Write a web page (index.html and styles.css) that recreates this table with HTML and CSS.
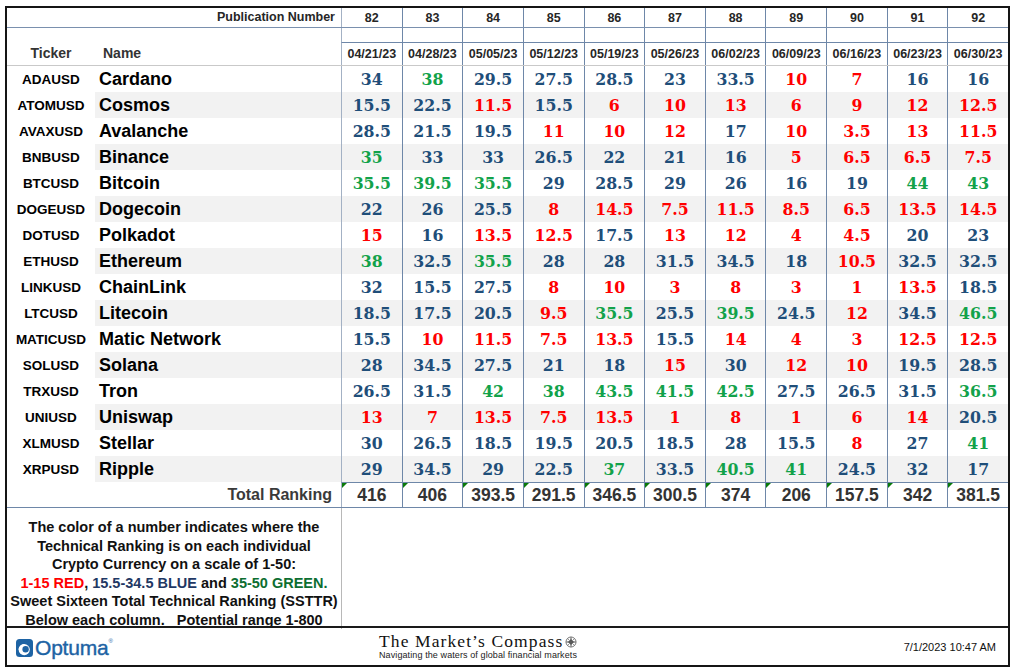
FILE: index.html
```html
<!DOCTYPE html>
<html>
<head>
<meta charset="utf-8">
<link rel="stylesheet" href="styles.css">
</head>
<body>
<div class="sheet">
  <div class="row h1">
    <div class="pub">Publication Number</div>
    <div class="hc first">82</div><div class="hc">83</div><div class="hc">84</div><div class="hc">85</div><div class="hc">86</div><div class="hc">87</div><div class="hc">88</div><div class="hc">89</div><div class="hc">90</div><div class="hc">91</div><div class="hc">92</div>
  </div>
  <div class="row h2">
    <div class="blank"></div>
    <div class="hc first"></div><div class="hc"></div><div class="hc"></div><div class="hc"></div><div class="hc"></div><div class="hc"></div><div class="hc"></div><div class="hc"></div><div class="hc"></div><div class="hc"></div><div class="hc"></div>
  </div>
  <div class="row h3">
    <div class="th-tick">Ticker</div><div class="th-name">Name</div>
    <div class="hc first">04/21/23</div><div class="hc">04/28/23</div><div class="hc">05/05/23</div><div class="hc">05/12/23</div><div class="hc">05/19/23</div><div class="hc">05/26/23</div><div class="hc">06/02/23</div><div class="hc">06/09/23</div><div class="hc">06/16/23</div><div class="hc">06/23/23</div><div class="hc">06/30/23</div>
  </div>

  <div class="row data"><div class="tick">ADAUSD</div><div class="name">Cardano</div><div class="v first b">34</div><div class="v g">38</div><div class="v b">29.5</div><div class="v b">27.5</div><div class="v b">28.5</div><div class="v b">23</div><div class="v b">33.5</div><div class="v r">10</div><div class="v r">7</div><div class="v b">16</div><div class="v b">16</div></div>
  <div class="row data alt"><div class="tick">ATOMUSD</div><div class="name">Cosmos</div><div class="v first b">15.5</div><div class="v b">22.5</div><div class="v r">11.5</div><div class="v b">15.5</div><div class="v r">6</div><div class="v r">10</div><div class="v r">13</div><div class="v r">6</div><div class="v r">9</div><div class="v r">12</div><div class="v r">12.5</div></div>
  <div class="row data"><div class="tick">AVAXUSD</div><div class="name">Avalanche</div><div class="v first b">28.5</div><div class="v b">21.5</div><div class="v b">19.5</div><div class="v r">11</div><div class="v r">10</div><div class="v r">12</div><div class="v b">17</div><div class="v r">10</div><div class="v r">3.5</div><div class="v r">13</div><div class="v r">11.5</div></div>
  <div class="row data alt"><div class="tick">BNBUSD</div><div class="name">Binance</div><div class="v first g">35</div><div class="v b">33</div><div class="v b">33</div><div class="v b">26.5</div><div class="v b">22</div><div class="v b">21</div><div class="v b">16</div><div class="v r">5</div><div class="v r">6.5</div><div class="v r">6.5</div><div class="v r">7.5</div></div>
  <div class="row data"><div class="tick">BTCUSD</div><div class="name">Bitcoin</div><div class="v first g">35.5</div><div class="v g">39.5</div><div class="v g">35.5</div><div class="v b">29</div><div class="v b">28.5</div><div class="v b">29</div><div class="v b">26</div><div class="v b">16</div><div class="v b">19</div><div class="v g">44</div><div class="v g">43</div></div>
  <div class="row data alt"><div class="tick">DOGEUSD</div><div class="name">Dogecoin</div><div class="v first b">22</div><div class="v b">26</div><div class="v b">25.5</div><div class="v r">8</div><div class="v r">14.5</div><div class="v r">7.5</div><div class="v r">11.5</div><div class="v r">8.5</div><div class="v r">6.5</div><div class="v r">13.5</div><div class="v r">14.5</div></div>
  <div class="row data"><div class="tick">DOTUSD</div><div class="name">Polkadot</div><div class="v first r">15</div><div class="v b">16</div><div class="v r">13.5</div><div class="v r">12.5</div><div class="v b">17.5</div><div class="v r">13</div><div class="v r">12</div><div class="v r">4</div><div class="v r">4.5</div><div class="v b">20</div><div class="v b">23</div></div>
  <div class="row data alt"><div class="tick">ETHUSD</div><div class="name">Ethereum</div><div class="v first g">38</div><div class="v b">32.5</div><div class="v g">35.5</div><div class="v b">28</div><div class="v b">28</div><div class="v b">31.5</div><div class="v b">34.5</div><div class="v b">18</div><div class="v r">10.5</div><div class="v b">32.5</div><div class="v b">32.5</div></div>
  <div class="row data"><div class="tick">LINKUSD</div><div class="name">ChainLink</div><div class="v first b">32</div><div class="v b">15.5</div><div class="v b">27.5</div><div class="v r">8</div><div class="v r">10</div><div class="v r">3</div><div class="v r">8</div><div class="v r">3</div><div class="v r">1</div><div class="v r">13.5</div><div class="v b">18.5</div></div>
  <div class="row data alt"><div class="tick">LTCUSD</div><div class="name">Litecoin</div><div class="v first b">18.5</div><div class="v b">17.5</div><div class="v b">20.5</div><div class="v r">9.5</div><div class="v g">35.5</div><div class="v b">25.5</div><div class="v g">39.5</div><div class="v b">24.5</div><div class="v r">12</div><div class="v b">34.5</div><div class="v g">46.5</div></div>
  <div class="row data"><div class="tick">MATICUSD</div><div class="name">Matic Network</div><div class="v first b">15.5</div><div class="v r">10</div><div class="v r">11.5</div><div class="v r">7.5</div><div class="v r">13.5</div><div class="v b">15.5</div><div class="v r">14</div><div class="v r">4</div><div class="v r">3</div><div class="v r">12.5</div><div class="v r">12.5</div></div>
  <div class="row data alt"><div class="tick">SOLUSD</div><div class="name">Solana</div><div class="v first b">28</div><div class="v b">34.5</div><div class="v b">27.5</div><div class="v b">21</div><div class="v b">18</div><div class="v r">15</div><div class="v b">30</div><div class="v r">12</div><div class="v r">10</div><div class="v b">19.5</div><div class="v b">28.5</div></div>
  <div class="row data"><div class="tick">TRXUSD</div><div class="name">Tron</div><div class="v first b">26.5</div><div class="v b">31.5</div><div class="v g">42</div><div class="v g">38</div><div class="v g">43.5</div><div class="v g">41.5</div><div class="v g">42.5</div><div class="v b">27.5</div><div class="v b">26.5</div><div class="v b">31.5</div><div class="v g">36.5</div></div>
  <div class="row data alt"><div class="tick">UNIUSD</div><div class="name">Uniswap</div><div class="v first r">13</div><div class="v r">7</div><div class="v r">13.5</div><div class="v r">7.5</div><div class="v r">13.5</div><div class="v r">1</div><div class="v r">8</div><div class="v r">1</div><div class="v r">6</div><div class="v r">14</div><div class="v b">20.5</div></div>
  <div class="row data"><div class="tick">XLMUSD</div><div class="name">Stellar</div><div class="v first b">30</div><div class="v b">26.5</div><div class="v b">18.5</div><div class="v b">19.5</div><div class="v b">20.5</div><div class="v b">18.5</div><div class="v b">28</div><div class="v b">15.5</div><div class="v r">8</div><div class="v b">27</div><div class="v g">41</div></div>
  <div class="row data alt"><div class="tick">XRPUSD</div><div class="name">Ripple</div><div class="v first b">29</div><div class="v b">34.5</div><div class="v b">29</div><div class="v b">22.5</div><div class="v g">37</div><div class="v b">33.5</div><div class="v g">40.5</div><div class="v g">41</div><div class="v b">24.5</div><div class="v b">32</div><div class="v b">17</div></div>

  <div class="row total">
    <div class="tot-label">Total Ranking</div>
    <div class="t first">416</div><div class="t">406</div><div class="t">393.5</div><div class="t">291.5</div><div class="t">346.5</div><div class="t">300.5</div><div class="t">374</div><div class="t">206</div><div class="t">157.5</div><div class="t">342</div><div class="t">381.5</div>
  </div>

  <div class="legend-row">
    <div class="legend">
      <div>The color of a number indicates where the</div>
      <div>Technical Ranking is on each individual</div>
      <div>Crypto Currency on a scale of 1-50:</div>
      <div><span class="lr">1-15 RED</span>, <span class="lb">15.5-34.5 BLUE</span> and <span class="lg">35-50 GREEN.</span></div>
      <div>Sweet Sixteen Total Technical Ranking (SSTTR)</div>
      <div>Below each column.&nbsp;&nbsp; Potential range 1-800</div>
    </div>
    <div class="legend-empty"></div>
  </div>

  <div class="footer">
    <div class="optuma">
      <svg class="opt-icon" width="17" height="18" viewBox="0 0 17 18">
        <rect x="0" y="0" width="17" height="18" rx="3.5" fill="#1d63a4"/>
        <circle cx="8.2" cy="10.6" r="5.6" fill="#fff"/>
        <circle cx="9.6" cy="10.2" r="3.2" fill="#1d63a4"/>
        <path d="M2.6 10.6 A5.6 5.6 0 0 1 8.2 5 L8.2 7 A3.6 3.6 0 0 0 4.6 10.6 Z" fill="#fff"/>
      </svg>
      <span class="opt-text">Optuma</span><span class="opt-reg">®</span>
    </div>
    <div class="brand">
      <div class="brand-title">The Market’s Compass
        <svg class="rose" width="12" height="12" viewBox="0 0 12 12">
          <circle cx="6" cy="6" r="5" fill="none" stroke="#555" stroke-width="0.8"/>
          <path d="M6 0.3 L7 5 L11.7 6 L7 7 L6 11.7 L5 7 L0.3 6 L5 5 Z" fill="#444"/>
          <path d="M2.5 2.5 L9.5 9.5 M9.5 2.5 L2.5 9.5" stroke="#666" stroke-width="0.7"/>
        </svg>
      </div>
      <div class="brand-sub">Navigating the waters of global financial markets</div>
    </div>
    <div class="stamp">7/1/2023 10:47 AM</div>
  </div>
</div>
</body>
</html>
```

FILE: styles.css
```css
* { box-sizing: border-box; margin: 0; padding: 0; }
body { background: #fff; font-family: "Liberation Sans", Arial, sans-serif; color: #000; }

.sheet {
  width: 1005px;
  height: 661px;
  margin: 6px 0 0 5px;
  border: 2px solid #151515;
  display: flex;
  flex-direction: column;
}

.row {
  display: grid;
  grid-template-columns: 88px 246px repeat(11, 1fr);
}

/* header rows */
.h1 { height: 20px; border-bottom: 1px solid #7a90ae; }
.h2 { height: 15px; }
.h3 { height: 23px; border-bottom: 1px solid #c9c9c9; }
.h2 .blank { grid-column: span 2; }
.pub {
  grid-column: span 2;
  text-align: right;
  padding-right: 6px;
  font-weight: bold;
  font-size: 12.5px;
  color: #262626;
  line-height: 19px;
}
.hc {
  border-left: 1px solid #6e87a8;
  display: flex;
  align-items: center;
  justify-content: center;
  font-weight: bold;
  font-size: 12.5px;
  color: #262626;
}
.h2 .hc { border-bottom: 1px solid #6e87a8; }
.hc.first, .v.first, .t.first { border-left-color: #a3b1c4; }
.th-tick, .th-name {
  font-weight: bold;
  font-size: 14px;
  color: #333;
  display: flex;
  align-items: center;
  padding-bottom: 3px;
}
.th-tick { justify-content: center; }
.th-name { padding-left: 8px; }

/* data rows */
.data { height: 26px; }
.alt .name, .alt .v { background: #f2f2f2; }
.tick {
  display: flex;
  align-items: center;
  justify-content: center;
  font-weight: bold;
  font-size: 13.5px;
}
.name {
  display: flex;
  align-items: center;
  padding-left: 4px;
  font-weight: bold;
  font-size: 18px;
}
.v {
  border-left: 1px solid #6e87a8;
  display: flex;
  align-items: center;
  justify-content: center;
  font-family: "DejaVu Serif", "Liberation Serif", serif;
  font-stretch: condensed;
  font-weight: bold;
  font-size: 17.5px;
}
.r { color: #ff0000; }
.b { color: #1f4e79; }
.g { color: #12a24a; }

/* totals */
.total { height: 26px; border-bottom: 1px solid #6e87a8; }
.tot-label {
  grid-column: span 2;
  text-align: right;
  padding-right: 9px;
  font-weight: bold;
  font-size: 16px;
  color: #3a3a3a;
  line-height: 25px;
}
.t {
  position: relative;
  border-left: 1px solid #6e87a8;
  border-top: 1px solid #6e87a8;
  display: flex;
  align-items: center;
  justify-content: center;
  font-weight: bold;
  font-size: 17.5px;
  color: #333;
}
.t::before {
  content: "";
  position: absolute;
  left: 0;
  top: 0;
  border-top: 5px solid #0a7a0a;
  border-right: 5px solid transparent;
}

/* legend */
.legend-row {
  height: 118px;
  display: grid;
  grid-template-columns: 334px 1fr;
}
.legend {
  padding-top: 10px;
  text-align: center;
  font-weight: bold;
  font-size: 14.5px;
  line-height: 18.5px;
  color: #111;
  white-space: nowrap;
}
.legend-empty { border-left: 1px solid #b8b8b8; }
.lr { color: #ff0000; }
.lb { color: #1f3864; }
.lg { color: #0d6e31; }

/* footer */
.footer {
  flex: 1;
  border-top: 2px solid #1a1a1a;
  display: grid;
  grid-template-columns: 372px auto 1fr;
  align-items: center;
}
.optuma {
  display: flex;
  align-items: center;
  padding-left: 9px;
  padding-top: 3px;
}
.opt-icon { display: block; margin-right: 2px; }
.opt-text {
  font-size: 21px;
  color: #1d63a4;
  -webkit-text-stroke: 0.4px #1d63a4;
  letter-spacing: -0.2px;
}
.opt-reg { font-size: 6px; color: #1d63a4; align-self: flex-start; margin-top: 2px; }
.brand { padding-top: 1px; }
.brand-title {
  font-family: "Liberation Serif", "Times New Roman", serif;
  font-size: 17.5px;
  letter-spacing: 1.1px;
  line-height: 17px;
  color: #111;
  display: flex;
  align-items: center;
  gap: 2px;
}
.rose { display: block; }
.brand-sub {
  font-size: 9px;
  color: #222;
  line-height: 11px;
  letter-spacing: 0.1px;
}
.stamp {
  justify-self: end;
  padding-right: 12px;
  font-size: 11px;
  color: #111;
}
```
